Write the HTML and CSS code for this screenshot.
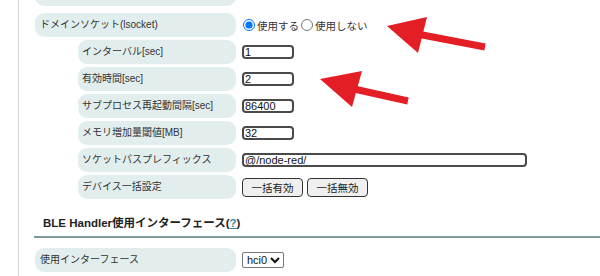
FILE: index.html
```html
<!DOCTYPE html>
<html lang="ja">
<head>
  <meta charset="UTF-8" />
  <title>設定</title>
  <link rel="stylesheet" href="styles.css">
</head>
<body>

  <div class="panel">
    <div class="grid top">
      <div class="label">LEDブザー</div>
      <div class="field">
        <label><input type="radio" name="buzzer">使用する</label>
        <label><input type="radio" name="buzzer" checked>使用しない</label>
      </div>
    </div>

    <div class="grid">
      <div class="label">ドメインソケット(lsocket)</div>
      <div class="field">
        <label><input type="radio" name="lsocket" checked>使用する</label>
        <label><input type="radio" name="lsocket">使用しない</label>
      </div>

      <div class="label sub">インターバル[sec]</div>
      <div class="field"><input class="text" type="text" value="1"></div>

      <div class="label sub">有効時間[sec]</div>
      <div class="field"><input class="text" type="text" value="2"></div>

      <div class="label sub">サブプロセス再起動間隔[sec]</div>
      <div class="field"><input class="text" type="text" value="86400"></div>

      <div class="label sub">メモリ増加量閾値[MB]</div>
      <div class="field"><input class="text" type="text" value="32"></div>

      <div class="label sub">ソケットパスプレフィックス</div>
      <div class="field"><input class="text wide" type="text" value="@/node-red/"></div>

      <div class="label sub">デバイス一括設定</div>
      <div class="field">
        <button>一括有効</button>
        <button>一括無効</button>
      </div>
    </div>

    <h3 class="section">BLE Handler使用インターフェース(<a href="#">?</a>)</h3>

    <div class="grid last">
      <div class="label">使用インターフェース</div>
      <div class="field">
        <select><option>hci0</option></select>
      </div>
    </div>
  </div>

  <!-- annotation arrows -->
  <svg class="arrows" width="600" height="276" viewBox="0 0 600 276">
    <line x1="412" y1="33" x2="485" y2="47" stroke="#e31e24" stroke-width="7"/>
    <polygon points="387,26 427,17 418,53" fill="#e31e24"/>
    <line x1="345" y1="87" x2="408" y2="101" stroke="#e31e24" stroke-width="7"/>
    <polygon points="320,79 362,71 352,107" fill="#e31e24"/>
  </svg>

</body>
</html>
```

FILE: styles.css
```css
body {
  margin: 0;
  font-family: "Liberation Sans", "Noto Sans CJK JP", sans-serif;
  font-size: 10.5px;
  color: #333;
  background: #fff;
  position: relative;
  overflow: hidden;
  height: 276px;
}

.panel {
  margin-left: 18px;
  margin-top: -18px;
  border-left: 1px solid #d6d6d6;
  padding-left: 16px;
  padding-bottom: 30px;
}

.grid {
  display: grid;
  grid-template-columns: 201px 1fr;
  column-gap: 6px;
  row-gap: 3px;
}

.grid.top {
  margin-bottom: 7px;
}

.label {
  height: 24px;
  line-height: 24px;
  padding-left: 5px;
  font-size: 10px;
  background: #e2eeee;
  border-radius: 9px;
  white-space: nowrap;
}

.label.sub {
  margin-left: 43px;
  padding-left: 4px;
}

.top .label {
  padding-left: 37px;
}

.field {
  display: flex;
  align-items: center;
  height: 24px;
}

.field label {
  display: flex;
  align-items: center;
  margin-right: 1px;
}

.field input[type="radio"] {
  width: 12px;
  height: 12px;
  margin: 0 2px 0 1px;
  accent-color: #0075ff;
}

.text {
  width: 52px;
  height: 14px;
  box-sizing: border-box;
  border: 2px solid #4a4a4a;
  border-radius: 4px;
  padding: 0 1px;
  font-family: "Liberation Sans", sans-serif;
  font-size: 11px;
  color: #111;
  outline: none;
}

.text.wide {
  width: 285px;
}

button {
  height: 19px;
  width: 61px;
  margin-right: 4px;
  padding: 0;
  font-family: "Liberation Sans", "Noto Sans CJK JP", sans-serif;
  font-size: 10.5px;
  color: #222;
  background: #efefef;
  border: 1.5px solid #333;
  border-radius: 4px;
}

.section {
  margin: 16px 0 0 -1px;
  padding: 0 0 5px 9px;
  font-size: 11.5px;
  line-height: 16px;
  font-weight: bold;
  color: #222;
  border-bottom: 2px solid #7f9c9c;
}

.section a {
  color: #3a8fa5;
}

.grid.last {
  margin-top: 10px;
}

select {
  height: 16px;
  width: 42px;
  padding: 0;
  font-family: "Liberation Sans", sans-serif;
  font-size: 11px;
  color: #111;
  border: 1px solid #777;
  border-radius: 2px;
  background: #fff;
}

.arrows {
  position: absolute;
  left: 0;
  top: 0;
  pointer-events: none;
}
```
